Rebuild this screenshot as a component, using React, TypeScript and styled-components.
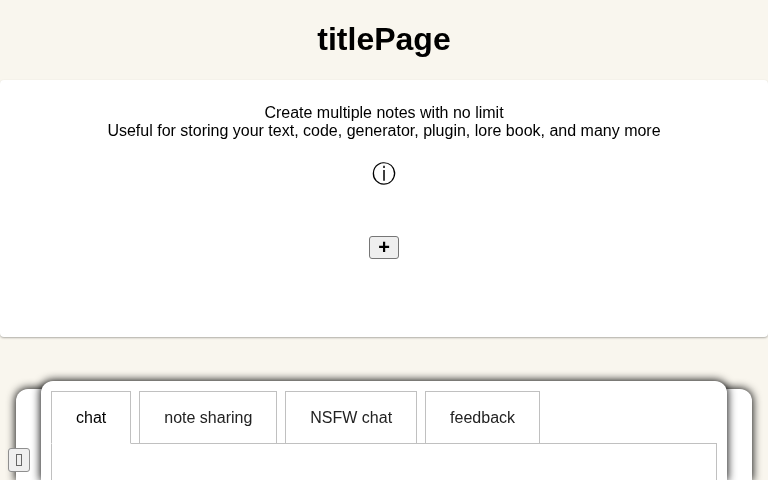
import React, { useState } from "react";
import styled, { createGlobalStyle } from "styled-components";

const Global = createGlobalStyle`
  html, body {
    margin: 0;
    height: 100%;
    overflow: hidden;
    background: #f9f6ee;
    font-family: "Liberation Sans", Arial, sans-serif;
    color: #000;
  }
`;

const Page = styled.div`
  height: 480px;
  overflow: hidden;
  will-change: transform;
`;

const Header = styled.header`
  height: 78px;
  padding-bottom: 2px;
  display: flex;
  align-items: center;
  justify-content: center;
`;

const Title = styled.h1`
  margin: 0;
  font-size: 32px;
  font-weight: 700;
`;

const Card = styled.main`
  height: 257px;
  box-sizing: border-box;
  padding-top: 24px;
  background: #fff;
  border-radius: 4px;
  box-shadow: 0 1px 2px rgba(0, 0, 0, 0.3);
  display: flex;
  flex-direction: column;
  align-items: center;
  text-align: center;
  font-size: 16px;
  line-height: 18px;
`;

const InfoGlyph = styled.div`
  margin-top: 20px;
  font-size: 24px;
  line-height: 28px;
  height: 28px;
`;

const AddButton = styled.button`
  margin-top: 48px;
  width: 30px;
  height: 23px;
  padding: 0 0 1px;
  border: 1px solid #767676;
  border-radius: 3px;
  background: #efefef;
  font-family: inherit;
  font-size: 20px;
  line-height: 20px;
  font-weight: 700;
  color: #000;
`;

const BackPanel = styled.section`
  margin: 52px 16px 0;
  padding: 0 25px;
  height: 91px;
  background: #fff;
  border-radius: 12px 12px 0 0;
  box-shadow: 0 0 9px 1px rgba(0, 0, 0, 0.9);
`;

const FrontPanel = styled.div`
  position: relative;
  top: -8px;
  height: 99px;
  box-sizing: border-box;
  padding: 10px 10px 0;
  background: #fff;
  border-radius: 12px 12px 0 0;
  box-shadow: 0 0 9px 1px rgba(0, 0, 0, 0.9);
  display: flex;
  flex-direction: column;
`;

const TabRow = styled.div`
  display: flex;
  gap: 8px;
`;

const Tab = styled.div<{ $active?: boolean }>`
  position: relative;
  z-index: ${(p) => (p.$active ? 1 : 0)};
  height: 53px;
  box-sizing: border-box;
  padding: 0 24px;
  display: flex;
  align-items: center;
  border: 1px solid #c0c0c0;
  border-bottom-color: ${(p) => (p.$active ? "#fff" : "#c0c0c0")};
  background: #fff;
  font-size: 16px;
  color: ${(p) => (p.$active ? "#000" : "#222")};
`;

const TabBody = styled.div`
  margin-top: -1px;
  flex: 1;
  border: 1px solid #c0c0c0;
  border-bottom: none;
`;

const CornerButton = styled.button`
  position: fixed;
  left: 8px;
  top: 448px;
  width: 22px;
  height: 24px;
  padding: 0;
  border: 1px solid #8f8f8f;
  border-radius: 3px;
  background: #efefef;
  display: flex;
  align-items: center;
  justify-content: center;
`;

// missing-glyph box shown on the small corner button
const MissingGlyph = styled.span`
  display: block;
  width: 4px;
  height: 10px;
  border: 1px solid #666;
`;

const tabs = ["chat", "note sharing", "NSFW chat", "feedback"];

export default function App() {
  const [active, setActive] = useState(0);

  return (
    <Page>
      <Global />
      <Header>
        <Title>titlePage</Title>
      </Header>
      <Card>
        <div>Create multiple notes with no limit</div>
        <div>Useful for storing your text, code, generator, plugin, lore book, and many more</div>
        <InfoGlyph>ⓘ</InfoGlyph>
        <AddButton>+</AddButton>
      </Card>
      <BackPanel>
        <FrontPanel>
          <TabRow>
            {tabs.map((t, i) => (
              <Tab key={t} $active={i === active} onClick={() => setActive(i)}>
                {t}
              </Tab>
            ))}
          </TabRow>
          <TabBody />
        </FrontPanel>
      </BackPanel>
      <CornerButton>
        <MissingGlyph />
      </CornerButton>
    </Page>
  );
}
